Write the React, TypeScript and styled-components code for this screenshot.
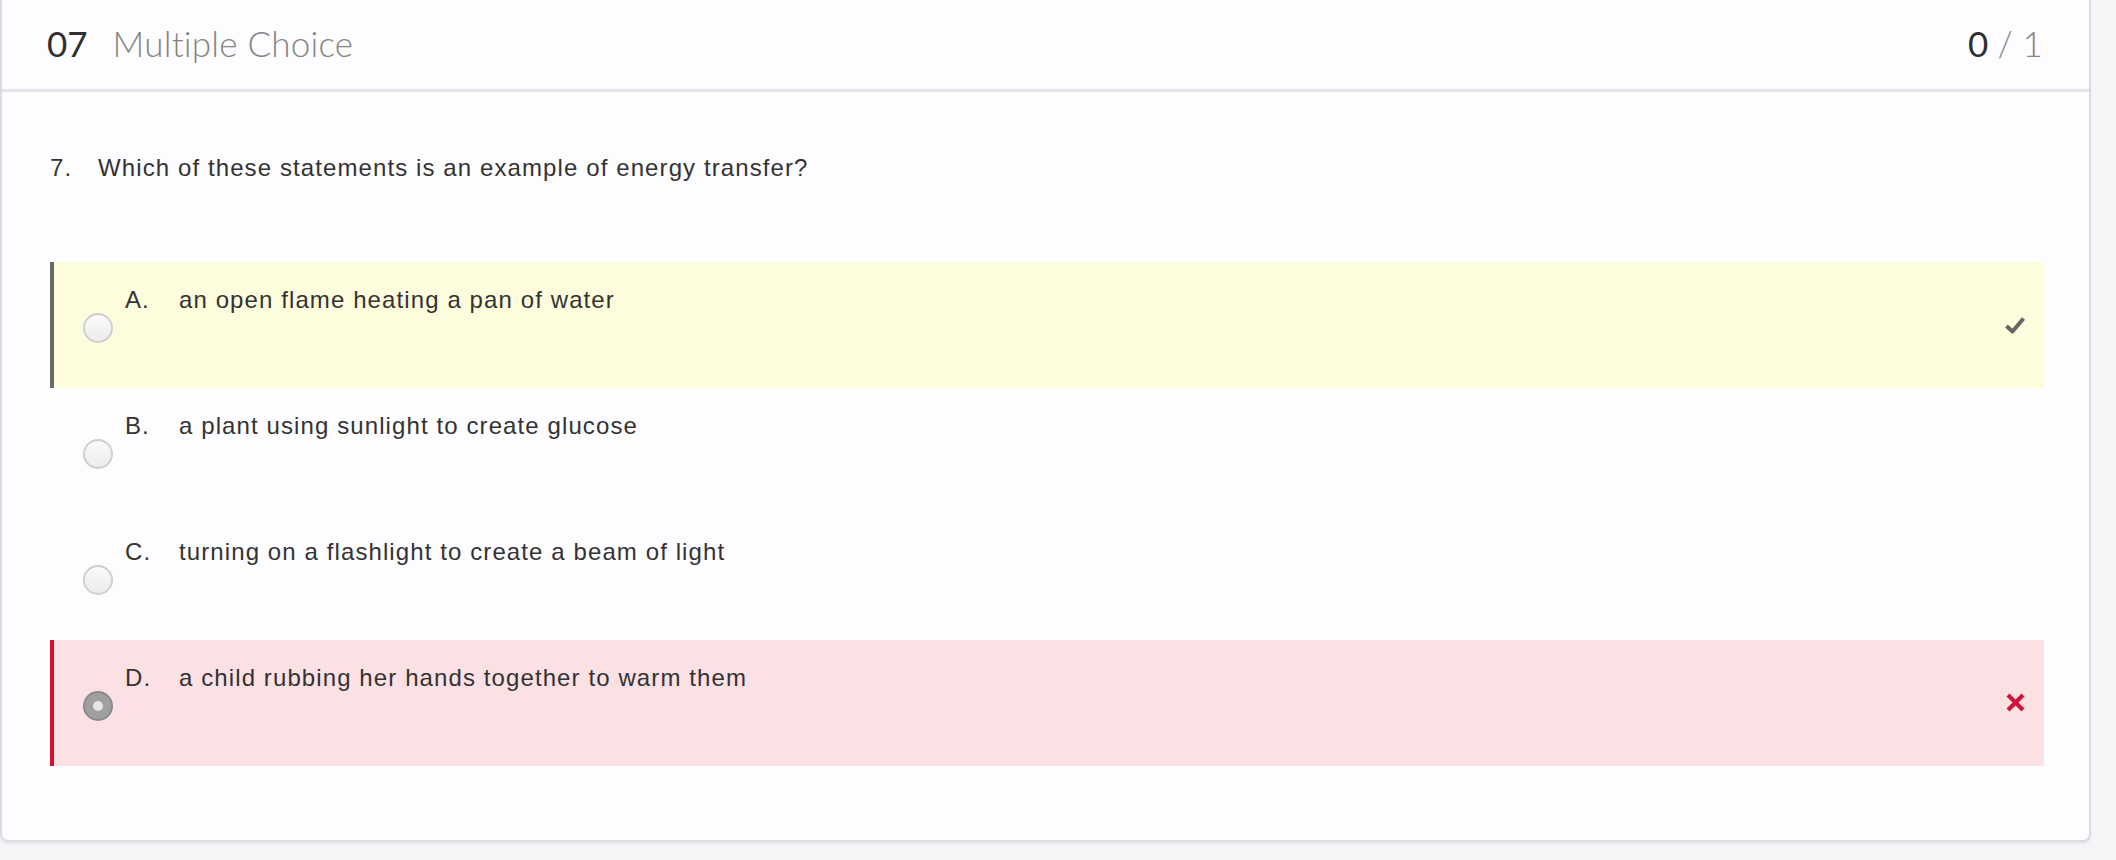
import React from "react";
import styled, { createGlobalStyle } from "styled-components";

const GlobalStyle = createGlobalStyle`
  html, body {
    margin: 0;
    padding: 0;
    background: #f5f4f7;
  }
  body {
    font-family: "Liberation Sans", Arial, sans-serif;
  }
  * { box-sizing: border-box; }
`;

const Page = styled.div`
  width: 2116px;
  height: 860px;
  overflow: hidden;
  background: #f5f4f7;
`;

const Card = styled.section`
  width: 2091px;
  background: #fdfcfe;
  border: 2px solid #dcdbe0;
  border-top: none;
  border-radius: 0 0 8px 8px;
  box-shadow: 0 2px 2px rgba(0, 0, 0, 0.06);
`;

const Header = styled.header`
  height: 92px;
  display: flex;
  align-items: center;
  padding: 0 46px 3px 45px;
  border-bottom: 3px solid #e4e3e7;
  font-family: Lato, "Open Sans", sans-serif;
  font-size: 35px;
  font-variant-ligatures: none;
`;

const HeaderTitle = styled.div`
  display: flex;
  align-items: baseline;
  gap: 25px;
`;

const Num = styled.span`
  color: #2f2f2f;
  font-weight: 400;
`;

const Kind = styled.span`
  color: #858585;
  font-weight: 300;
  letter-spacing: 0.2px;
`;

const Score = styled.div`
  margin-left: auto;
  display: flex;
  align-items: baseline;
  gap: 9px;
`;

const Body = styled.div`
  padding: 59px 45px 74px 48px;
  font-size: 24px;
  line-height: 1.4;
  letter-spacing: 1.1px;
  color: #333;
`;

const Question = styled.div`
  display: flex;
`;

const QNum = styled.span`
  width: 48px;
  flex: none;
`;

const Options = styled.div`
  display: flex;
  flex-direction: column;
  margin-top: 77px;
`;

type Status = "correct" | "wrong" | "none";

const bgFor = (s: Status) =>
  s === "correct" ? "#fdfddd" : s === "wrong" ? "#fbe0e4" : "transparent";
const barFor = (s: Status) =>
  s === "correct" ? "#6a6a6a" : s === "wrong" ? "#d2102f" : "transparent";

const OptionRow = styled.div<{ $status: Status }>`
  height: 126px;
  display: flex;
  align-items: center;
  padding: 0 18px 0 29px;
  background: ${(p) => bgFor(p.$status)};
  border-left: 4px solid ${(p) => barFor(p.$status)};
`;

const Radio = styled.span<{ $checked?: boolean }>`
  width: 30px;
  height: 30px;
  margin-top: 6px;
  flex: none;
  border-radius: 50%;
  display: flex;
  align-items: center;
  justify-content: center;
  border: 2px solid ${(p) => (p.$checked ? "#8a8a8a" : "#cfcfcf")};
  background: ${(p) =>
    p.$checked ? "#a0a0a0" : "linear-gradient(#fafafa, #ececec)"};
  &::after {
    content: "";
    display: ${(p) => (p.$checked ? "block" : "none")};
    width: 10px;
    height: 10px;
    border-radius: 50%;
    background: #e6e6e6;
  }
`;

const Label = styled.div`
  align-self: flex-start;
  padding-top: 21px;
  margin-left: 12px;
  display: flex;
`;

const Letter = styled.span`
  width: 54px;
  flex: none;
`;

const Mark = styled.span`
  margin-left: auto;
  display: flex;
  align-items: center;
`;

const CheckIcon = () => (
  <svg width="22" height="20" viewBox="0 0 22 20">
    <path
      d="M2.5 11 L8.5 16.5 L19.5 3.5"
      fill="none"
      stroke="#666"
      strokeWidth="4"
      strokeLinejoin="round"
    />
  </svg>
);

const CrossIcon = () => (
  <svg width="21" height="21" viewBox="0 0 21 21">
    <path
      d="M3 3 L18 18 M18 3 L3 18"
      fill="none"
      stroke="#d3123c"
      strokeWidth="4.2"
    />
  </svg>
);

const options: { letter: string; text: string; status: Status; checked?: boolean }[] = [
  { letter: "A.", text: "an open flame heating a pan of water", status: "correct" },
  { letter: "B.", text: "a plant using sunlight to create glucose", status: "none" },
  { letter: "C.", text: "turning on a flashlight to create a beam of light", status: "none" },
  { letter: "D.", text: "a child rubbing her hands together to warm them", status: "wrong", checked: true },
];

export default function App() {
  return (
    <Page>
      <GlobalStyle />
      <Card>
        <Header>
          <HeaderTitle>
            <Num>07</Num>
            <Kind>Multiple Choice</Kind>
          </HeaderTitle>
          <Score>
            <Num>0</Num>
            <Kind>/ 1</Kind>
          </Score>
        </Header>
        <Body>
          <Question>
            <QNum>7.</QNum>
            <span>Which of these statements is an example of energy transfer?</span>
          </Question>
          <Options>
            {options.map((o) => (
              <OptionRow key={o.letter} $status={o.status}>
                <Radio $checked={o.checked} />
                <Label>
                  <Letter>{o.letter}</Letter>
                  <span>{o.text}</span>
                </Label>
                <Mark>
                  {o.status === "correct" && <CheckIcon />}
                  {o.status === "wrong" && <CrossIcon />}
                </Mark>
              </OptionRow>
            ))}
          </Options>
        </Body>
      </Card>
    </Page>
  );
}
